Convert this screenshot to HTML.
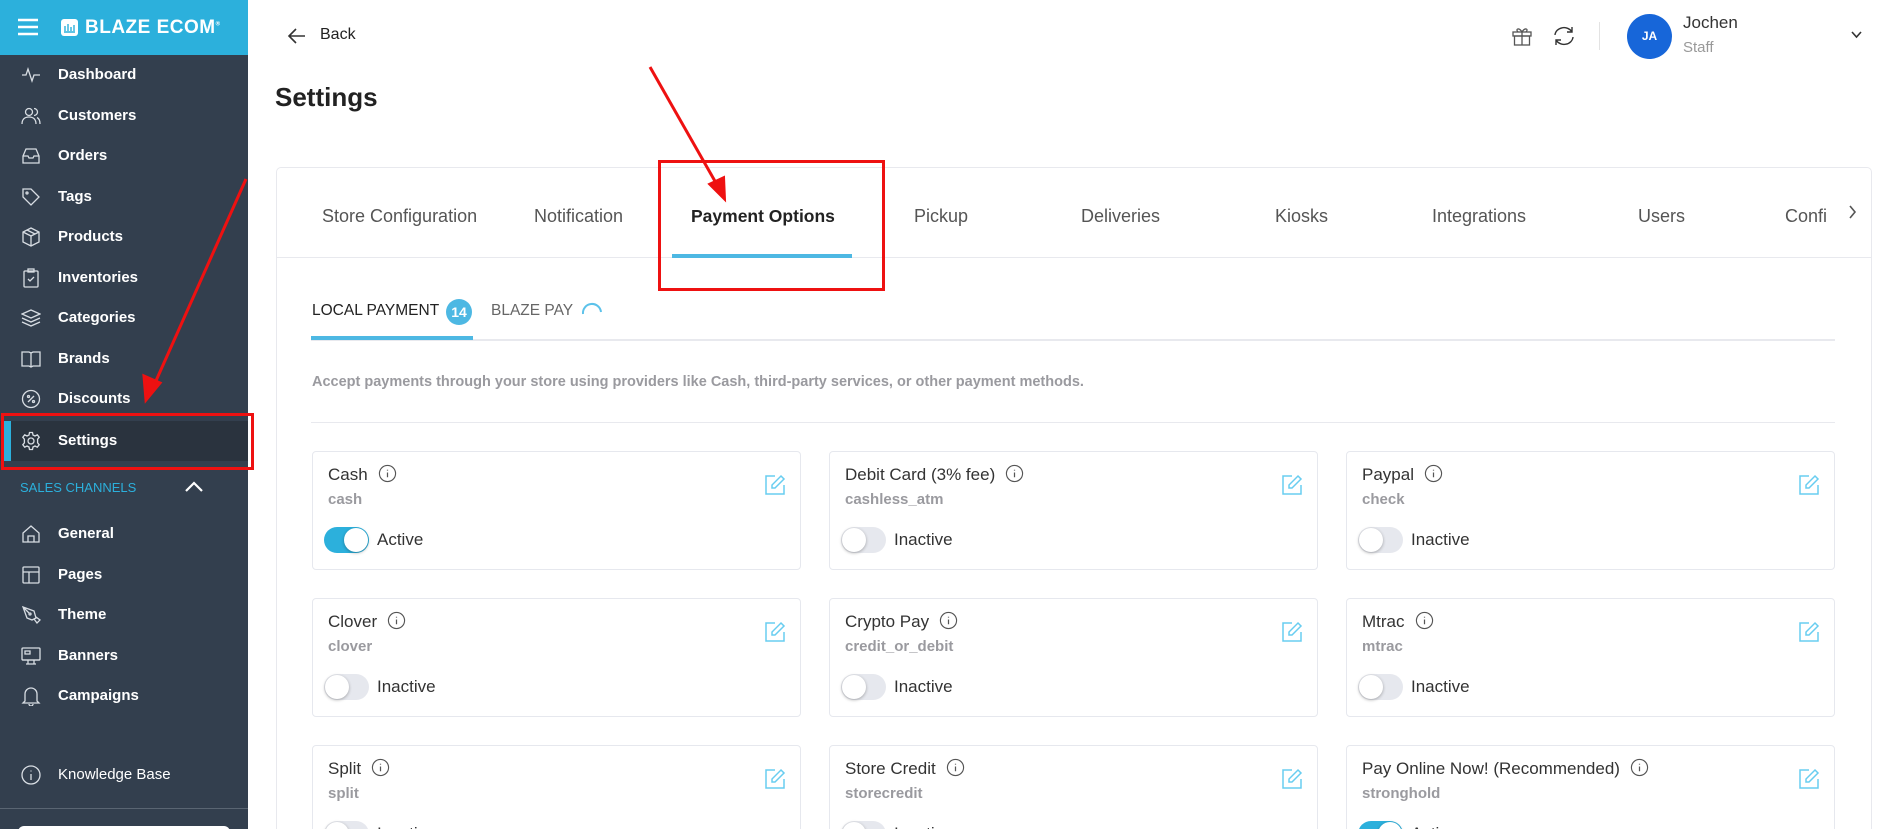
<!DOCTYPE html>
<html style="width:1898px;height:829px;overflow:hidden"><head><meta charset="utf-8"><style>
*{box-sizing:border-box;margin:0;padding:0}
body{width:1898px;height:829px;overflow:hidden;background:#fff;font-family:"Liberation Sans",sans-serif;color:#333}
#wrap{position:relative;width:1898px;height:829px;overflow:hidden}
.abs{position:absolute}
#side{left:0;top:0;width:248px;height:829px;background:#333f4e}
#hdr{left:0;top:0;width:248px;height:55px;background:#2cb0dc}
.mi{position:absolute;left:0;width:248px;height:40px;color:#fff;font-weight:bold;font-size:15px;line-height:40px;padding-left:58px}
.mi svg{position:absolute;left:21px;top:10px;width:20px;height:20px;fill:none;stroke:#d8dde3;stroke-width:1.3}
.tab{position:absolute;top:206px;font-size:18px;color:#555;white-space:nowrap}
.card{position:absolute;width:489px;height:119px;border:1px solid #e6e8ee;border-radius:4px;background:#fff;overflow:hidden}
.card .t{position:absolute;left:15px;top:12px;font-size:17px;color:#333;white-space:nowrap}
.card .t svg{width:19px;height:19px;vertical-align:-3px;margin-left:10px}
.card .s{position:absolute;left:15px;top:39px;font-size:15px;font-weight:bold;color:#9a9a9f}
.tg{position:absolute;left:11px;top:75px;width:45px;height:26px;border-radius:13px;background:#e6e8ee}
.tg::after{content:"";position:absolute;left:1px;top:1px;width:24px;height:24px;border-radius:50%;background:#fff;box-shadow:0 1px 3px rgba(0,0,0,.3)}
.tg.on{background:#2cb0dc}
.tg.on::after{left:20px}
.lb{position:absolute;left:64px;top:78px;font-size:17px;color:#333}
.ed{position:absolute;left:451px;top:22px;width:22px;height:22px;fill:none;stroke:#68cdf0;stroke-width:1.5}
</style></head><body><div id="wrap">
<div id="side" class="abs"></div>
<div id="hdr" class="abs"></div>
<svg class="abs" style="left:17px;top:18px" width="22" height="18"><path d="M1 2H21M1 9H21M1 16H21" stroke="#fff" stroke-width="2.4"/></svg>
<svg class="abs" style="left:61px;top:19px" width="17" height="17"><rect width="17" height="17" rx="3" fill="#fff"/><path d="M4 12V7M7 12V5M10 12V8M13 12V6M3 13H14" stroke="#2cb0dc" stroke-width="1.4"/></svg>
<div class="abs" style="left:85px;top:17px;font-size:19px;font-weight:bold;color:#fff;letter-spacing:.5px">BLAZE ECOM<sup style="font-size:6px">®</sup></div>

<div class="mi" style="top:55px"><svg viewBox="0 0 20 20"><path d="M1 10H5L7 4L11 16L13 10H19"/></svg>Dashboard</div>
<div class="mi" style="top:96px"><svg viewBox="0 0 20 20"><circle cx="8" cy="6" r="3.5"/><path d="M1 18C1 13 4 11 8 11S15 13 15 18M13 2.5A3.5 3.5 0 0 1 13 9.5M16 11.5C18 12.5 19 15 19 18"/></svg>Customers</div>
<div class="mi" style="top:136px"><svg viewBox="0 0 20 20"><path d="M2 10L5 3H15L18 10V17H2ZM2 10H7L8 12H12L13 10H18"/></svg>Orders</div>
<div class="mi" style="top:177px"><svg viewBox="0 0 20 20"><path d="M2 2H10L18 10L10 18L2 10Z"/><circle cx="6" cy="6" r="1"/></svg>Tags</div>
<div class="mi" style="top:217px"><svg viewBox="0 0 20 20"><path d="M10 1L18 5V15L10 19L2 15V5ZM2 5L10 9L18 5M10 9V19M6 3L14 7"/></svg>Products</div>
<div class="mi" style="top:258px"><svg viewBox="0 0 20 20"><rect x="3" y="3" width="14" height="16" rx="1"/><rect x="7" y="1" width="6" height="3"/><path d="M7 11L9 13L13 9"/></svg>Inventories</div>
<div class="mi" style="top:298px"><svg viewBox="0 0 20 20"><path d="M10 2L19 6L10 10L1 6ZM1 10L10 14L19 10M1 14L10 18L19 14"/></svg>Categories</div>
<div class="mi" style="top:339px"><svg viewBox="0 0 20 20"><path d="M10 4V18M1 3H8L10 4L12 3H19V17H12L10 18L8 17H1Z"/></svg>Brands</div>
<div class="mi" style="top:379px"><svg viewBox="0 0 20 20"><circle cx="10" cy="10" r="8.5"/><path d="M7 13L13 7"/><circle cx="7.5" cy="7.5" r="1"/><circle cx="12.5" cy="12.5" r="1"/></svg>Discounts</div>
<div class="abs" style="left:0;top:421px;width:248px;height:40px;background:#2a333e"></div>
<div class="abs" style="left:2px;top:421px;width:9px;height:40px;background:#2cb0dc"></div>
<div class="mi" style="top:421px"><svg viewBox="0 0 20 20"><circle cx="10" cy="10" r="3"/><path d="M8.5 1.5H11.5L12 4L14 5L16.3 3.8L18.2 6.2L16.6 8.2V11.8L18.2 13.8L16.3 16.2L14 15L12 16L11.5 18.5H8.5L8 16L6 15L3.7 16.2L1.8 13.8L3.4 11.8V8.2L1.8 6.2L3.7 3.8L6 5L8 4Z"/></svg>Settings</div>
<div class="abs" style="left:1px;top:413px;width:253px;height:57px;border:3px solid #ee1111"></div>
<div class="abs" style="left:20px;top:480px;font-size:13px;color:#2cb0dc">SALES CHANNELS</div>
<svg class="abs" style="left:184px;top:481px" width="20" height="12"><path d="M2 10L10 2L18 10" fill="none" stroke="#fff" stroke-width="2.2"/></svg>
<div class="mi" style="top:514px"><svg viewBox="0 0 20 20"><path d="M2 9L10 2L18 9V18H2ZM7 18V12H13V18"/></svg>General</div>
<div class="mi" style="top:555px"><svg viewBox="0 0 20 20"><rect x="2" y="2" width="16" height="16" rx="1"/><path d="M2 7H18M8 7V18"/></svg>Pages</div>
<div class="mi" style="top:595px"><svg viewBox="0 0 20 20"><path d="M2 2L13 6L15 13L11 15L6 13ZM2 2L8 8M13 14L16 18L19 15L15 12"/><circle cx="9" cy="9" r="1"/></svg>Theme</div>
<div class="mi" style="top:636px"><svg viewBox="0 0 20 20"><rect x="1" y="2" width="18" height="12" rx="1"/><path d="M4 5H9V8H4ZM1 14H19M7 14V18H13V14M5 18H15"/></svg>Banners</div>
<div class="mi" style="top:676px"><svg viewBox="0 0 20 20"><path d="M4 15V8A6 6 0 0 1 16 8V15L18 17H2ZM8 18A2 2 0 0 0 12 18"/></svg>Campaigns</div>
<div class="mi" style="top:755px;font-weight:normal"><svg viewBox="0 0 20 20"><circle cx="10" cy="10" r="9"/><path d="M10 9V15M10 5.5V6.5"/></svg>Knowledge Base</div>
<div class="abs" style="left:0;top:808px;width:248px;height:1px;background:#5a6572"></div>
<div class="abs" style="left:18px;top:826px;width:212px;height:20px;border-radius:6px;background:#fff"></div>
<svg class="abs" style="left:0;top:0" width="260" height="420"><path d="M246 179L151 392" stroke="#ee1111" stroke-width="3"/><path d="M146 400L144 376L160 383Z" fill="#ee1111" stroke="#ee1111" stroke-width="3"/></svg>

<svg class="abs" style="left:287px;top:27px" width="20" height="18"><path d="M18 9H3M9 2L2 9L9 16" fill="none" stroke="#333" stroke-width="1.6"/></svg>
<div class="abs" style="left:320px;top:26px;font-size:16px;color:#222">Back</div>
<div class="abs" style="left:275px;top:82px;font-size:26px;font-weight:bold;color:#222">Settings</div>
<svg class="abs" style="left:1511px;top:25px" width="22" height="22" viewBox="0 0 22 22" fill="none" stroke="#555" stroke-width="1.3"><rect x="2" y="7" width="18" height="4"/><rect x="3.5" y="11" width="15" height="9"/><path d="M11 7V20M11 7C8 2 4 4 7 7M11 7C14 2 18 4 15 7"/></svg>
<svg class="abs" style="left:1552px;top:25px" width="24" height="22" viewBox="0 0 24 22" fill="none" stroke="#333" stroke-width="1.4"><path d="M3 10A9 8 0 0 1 20 7M21 12A9 8 0 0 1 4 15M20 2V7H15M4 20V15H9"/></svg>
<div class="abs" style="left:1599px;top:22px;width:1px;height:28px;background:#e3e3e3"></div>
<div class="abs" style="left:1627px;top:14px;width:45px;height:45px;border-radius:50%;background:#1766d9;color:#fff;font-size:12px;font-weight:bold;text-align:center;line-height:45px">JA</div>
<div class="abs" style="left:1683px;top:13px;font-size:17px;color:#333">Jochen</div>
<div class="abs" style="left:1683px;top:39px;font-size:15px;color:#999">Staff</div>
<svg class="abs" style="left:1851px;top:31px" width="11" height="8"><path d="M1 1L5.5 6L10 1" fill="none" stroke="#333" stroke-width="1.6"/></svg>

<div class="abs" style="left:276px;top:167px;width:1596px;height:700px;border:1px solid #e8e9ee;border-radius:5px"></div>
<div class="abs" style="left:277px;top:257px;width:1594px;height:1px;background:#e8e9ee"></div>
<div class="tab" style="left:322px">Store Configuration</div>
<div class="tab" style="left:534px">Notification</div>
<div class="tab" style="left:691px;color:#222;font-weight:bold;font-size:17.5px">Payment Options</div>
<div class="tab" style="left:914px">Pickup</div>
<div class="tab" style="left:1081px">Deliveries</div>
<div class="tab" style="left:1275px">Kiosks</div>
<div class="tab" style="left:1432px">Integrations</div>
<div class="tab" style="left:1638px">Users</div>
<div class="tab" style="left:1785px;width:42px;overflow:hidden">Configuration</div>
<svg class="abs" style="left:1848px;top:205px" width="9" height="14"><path d="M2 1L7 7L2 13" fill="none" stroke="#555" stroke-width="1.6"/></svg>
<div class="abs" style="left:672px;top:254px;width:180px;height:4px;background:#4db8e3"></div>
<div class="abs" style="left:658px;top:160px;width:227px;height:131px;border:3px solid #ee1111"></div>
<svg class="abs" style="left:640px;top:60px" width="100" height="150"><path d="M10 7L80 130" stroke="#ee1111" stroke-width="3"/><path d="M85 140L69 124L84 117Z" fill="#ee1111" stroke="#ee1111" stroke-width="2"/></svg>

<div class="abs" style="left:312px;top:302px;font-size:15.5px;color:#222">LOCAL PAYMENT</div>
<div class="abs" style="left:446px;top:299px;width:26px;height:26px;border-radius:50%;background:#4db8e3;color:#fff;font-size:14px;font-weight:bold;text-align:center;line-height:26px">14</div>
<div class="abs" style="left:491px;top:302px;font-size:15.5px;color:#666">BLAZE PAY</div>
<svg class="abs" style="left:580px;top:300px" width="24" height="24"><path d="M3 14A9 9 0 0 1 21 12" fill="none" stroke="#5cc2ea" stroke-width="2"/></svg>
<div class="abs" style="left:311px;top:339px;width:1524px;height:2px;background:#e8e9ee"></div>
<div class="abs" style="left:311px;top:336px;width:162px;height:4px;background:#4db8e3"></div>
<div class="abs" style="left:312px;top:374px;font-size:14.5px;font-weight:bold;color:#9a9a9f">Accept payments through your store using providers like Cash, third-party services, or other payment methods.</div>
<div class="abs" style="left:311px;top:422px;width:1524px;height:1px;background:#e8e9ee"></div>

<div class="card" style="left:312px;top:451px"><div class="t">Cash<svg viewBox="0 0 20 20"><circle cx="10" cy="10" r="8.5" fill="none" stroke="#555" stroke-width="1.2"/><path d="M10 9V14M10 6V7" stroke="#555" stroke-width="1.3"/></svg></div><div class="s">cash</div><div class="tg on"></div><div class="lb">Active</div><svg class="ed" viewBox="0 0 22 22"><path d="M11 2H2V20H20V11M17 2L20 5L11 14H8V11Z"/></svg></div>
<div class="card" style="left:829px;top:451px"><div class="t">Debit Card (3% fee)<svg viewBox="0 0 20 20"><circle cx="10" cy="10" r="8.5" fill="none" stroke="#555" stroke-width="1.2"/><path d="M10 9V14M10 6V7" stroke="#555" stroke-width="1.3"/></svg></div><div class="s">cashless_atm</div><div class="tg"></div><div class="lb">Inactive</div><svg class="ed" viewBox="0 0 22 22"><path d="M11 2H2V20H20V11M17 2L20 5L11 14H8V11Z"/></svg></div>
<div class="card" style="left:1346px;top:451px"><div class="t">Paypal<svg viewBox="0 0 20 20"><circle cx="10" cy="10" r="8.5" fill="none" stroke="#555" stroke-width="1.2"/><path d="M10 9V14M10 6V7" stroke="#555" stroke-width="1.3"/></svg></div><div class="s">check</div><div class="tg"></div><div class="lb">Inactive</div><svg class="ed" viewBox="0 0 22 22"><path d="M11 2H2V20H20V11M17 2L20 5L11 14H8V11Z"/></svg></div>

<div class="card" style="left:312px;top:598px"><div class="t">Clover<svg viewBox="0 0 20 20"><circle cx="10" cy="10" r="8.5" fill="none" stroke="#555" stroke-width="1.2"/><path d="M10 9V14M10 6V7" stroke="#555" stroke-width="1.3"/></svg></div><div class="s">clover</div><div class="tg"></div><div class="lb">Inactive</div><svg class="ed" viewBox="0 0 22 22"><path d="M11 2H2V20H20V11M17 2L20 5L11 14H8V11Z"/></svg></div>
<div class="card" style="left:829px;top:598px"><div class="t">Crypto Pay<svg viewBox="0 0 20 20"><circle cx="10" cy="10" r="8.5" fill="none" stroke="#555" stroke-width="1.2"/><path d="M10 9V14M10 6V7" stroke="#555" stroke-width="1.3"/></svg></div><div class="s">credit_or_debit</div><div class="tg"></div><div class="lb">Inactive</div><svg class="ed" viewBox="0 0 22 22"><path d="M11 2H2V20H20V11M17 2L20 5L11 14H8V11Z"/></svg></div>
<div class="card" style="left:1346px;top:598px"><div class="t">Mtrac<svg viewBox="0 0 20 20"><circle cx="10" cy="10" r="8.5" fill="none" stroke="#555" stroke-width="1.2"/><path d="M10 9V14M10 6V7" stroke="#555" stroke-width="1.3"/></svg></div><div class="s">mtrac</div><div class="tg"></div><div class="lb">Inactive</div><svg class="ed" viewBox="0 0 22 22"><path d="M11 2H2V20H20V11M17 2L20 5L11 14H8V11Z"/></svg></div>

<div class="card" style="left:312px;top:745px"><div class="t">Split<svg viewBox="0 0 20 20"><circle cx="10" cy="10" r="8.5" fill="none" stroke="#555" stroke-width="1.2"/><path d="M10 9V14M10 6V7" stroke="#555" stroke-width="1.3"/></svg></div><div class="s">split</div><div class="tg"></div><div class="lb">Inactive</div><svg class="ed" viewBox="0 0 22 22"><path d="M11 2H2V20H20V11M17 2L20 5L11 14H8V11Z"/></svg></div>
<div class="card" style="left:829px;top:745px"><div class="t">Store Credit<svg viewBox="0 0 20 20"><circle cx="10" cy="10" r="8.5" fill="none" stroke="#555" stroke-width="1.2"/><path d="M10 9V14M10 6V7" stroke="#555" stroke-width="1.3"/></svg></div><div class="s">storecredit</div><div class="tg"></div><div class="lb">Inactive</div><svg class="ed" viewBox="0 0 22 22"><path d="M11 2H2V20H20V11M17 2L20 5L11 14H8V11Z"/></svg></div>
<div class="card" style="left:1346px;top:745px"><div class="t">Pay Online Now! (Recommended)<svg viewBox="0 0 20 20"><circle cx="10" cy="10" r="8.5" fill="none" stroke="#555" stroke-width="1.2"/><path d="M10 9V14M10 6V7" stroke="#555" stroke-width="1.3"/></svg></div><div class="s">stronghold</div><div class="tg on"></div><div class="lb">Active</div><svg class="ed" viewBox="0 0 22 22"><path d="M11 2H2V20H20V11M17 2L20 5L11 14H8V11Z"/></svg></div>
</div></body></html>
